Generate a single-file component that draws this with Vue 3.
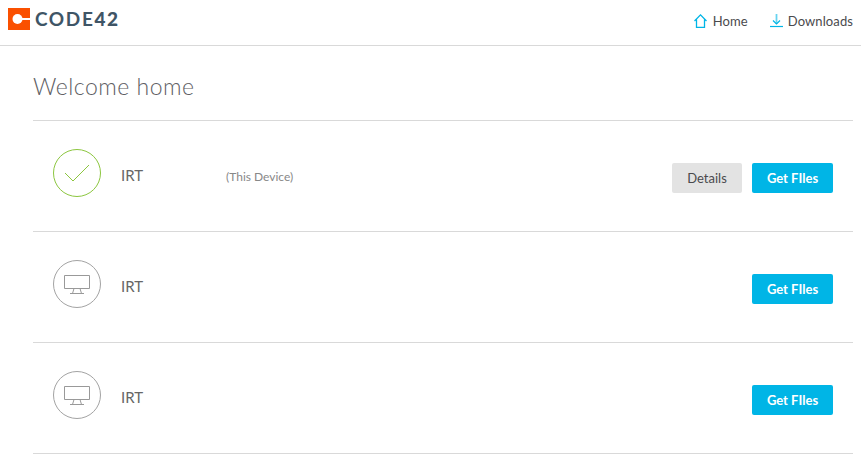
<template>
  <div class="page">
    <header class="topbar">
      <div class="brand">
        <svg class="logo" width="22" height="22" viewBox="0 0 22 22" aria-hidden="true">
          <rect width="22" height="22" fill="#fa5000" />
          <circle cx="9.500" cy="11" r="5" fill="#fff" />
          <rect x="13" y="10" width="9" height="2" fill="#fff" />
        </svg>
        <span class="wordmark">CODE<b>42</b></span>
      </div>
      <nav class="nav">
        <a class="nav-link home-link">
          <svg width="13" height="14" viewBox="0 0 13 14" fill="none" stroke="#00b5e6" stroke-width="1.300">
            <path d="M.5 7 6.500 .9 12.500 7M2.500 5.500v7.800h8V5.500" />
          </svg>
          Home
        </a>
        <a class="nav-link">
          <svg width="13" height="14" viewBox="0 0 13 14" fill="none" stroke="#00b5e6">
            <path d="M6.500 0v10" stroke-width="1.800" stroke-opacity=".6" />
            <path d="M3 6.500 6.500 10 10 6.500" stroke-width="1.200" />
            <path d="M0 12.500h13" stroke-width="1.200" />
          </svg>
          Downloads
        </a>
      </nav>
    </header>

    <main class="content">
      <h1>Welcome home</h1>
      <ul class="devices">
        <li v-for="device in devices" :key="device.id" class="device">
          <span class="status" :class="{ current: device.current }">
            <svg v-if="device.current" width="28" height="22" viewBox="0 0 28 22" fill="none" stroke="#8cc63f" stroke-width="1">
              <path d="M2 11l8 8L26 3" />
            </svg>
            <svg v-else width="28" height="20" viewBox="0 0 28 20" fill="none" stroke="#999" stroke-width="1">
              <path d="M1.500 1.500h25v13h-25zM11 14.500 9.500 19.500M17 14.500l1.500 5M7 19.500h14" />
            </svg>
          </span>
          <span class="name">IRT</span>
          <span v-if="device.current" class="this-device">(This Device)</span>
          <div class="actions">
            <button v-if="device.current" class="btn btn-grey" type="button">Details</button>
            <button class="btn btn-blue" type="button">Get FIles</button>
          </div>
        </li>
      </ul>
    </main>
  </div>
</template>

<script setup>
const devices = [
  { id: 1, current: true },
  { id: 2, current: false },
  { id: 3, current: false },
];
</script>

<style>
html, body { background: #fff; }
</style>

<style scoped>
.page {
  width: 861px;
  height: 472px;
  overflow: hidden;
  font-family: Lato, "Open Sans", sans-serif;
  color: #4a4a4d;
}

.topbar {
  height: 45px;
  box-sizing: content-box;
  display: flex;
  justify-content: space-between;
  border-bottom: 1px solid #d9d9d9;
}

.brand { display: flex; align-items: flex-start; padding: 8px 0 0 8px; gap: 5px; }
.logo { display: block; }
.wordmark {
  font-size: 19px;
  line-height: 22px;
  letter-spacing: 1.600px;
  color: #3f5566;
  font-weight: 700;
}
.wordmark b { font-weight: 900; }

.nav { display: flex; gap: 22px; padding: 14px 8px 0 0; align-items: flex-start; }
.nav-link { display: flex; align-items: center; gap: 5px; font-size: 13px; line-height: 14px; letter-spacing: .1px; }
.nav-link svg { display: block; }
.home-link { gap: 6px; }

.content { padding: 0 8px 0 33px; }

h1 {
  margin: 0;
  height: 75px;
  padding-top: 26px;
  box-sizing: border-box;
  font-size: 23px;
  line-height: 28px;
  letter-spacing: .5px;
  font-weight: 300;
  color: #606064;
  border-bottom: 1px solid #d9d9d9;
}

.devices { list-style: none; margin: 0; padding: 0; }

.device {
  height: 110px;
  display: flex;
  align-items: flex-start;
  border-bottom: 1px solid #d9d9d9;
  padding-left: 20px;
}

.status {
  flex: none;
  width: 48px;
  height: 48px;
  margin-top: 28px;
  box-sizing: border-box;
  border: 1px solid #a3a3a3;
  border-radius: 50%;
  display: flex;
  align-items: center;
  justify-content: center;
}
.status.current { border-color: #8cc63f; }

.name { margin: 45px 0 0 20px; width: 105px; font-size: 15px; line-height: 18px; color: #666; }
.this-device { margin-top: 49px; font-size: 12px; line-height: 14px; color: #888; }

.actions { margin: 42px 20px 0 auto; display: flex; gap: 10px; }

.btn {
  height: 30px;
  padding: 0;
  border: 0;
  border-radius: 2px;
  font-family: inherit;
  font-size: 13px;
}
.btn-grey { width: 70px; background: #e3e3e3; color: #4a4a4d; }
.btn-blue { width: 81px; background: #00b5e6; color: #fff; font-weight: 700; }
</style>
